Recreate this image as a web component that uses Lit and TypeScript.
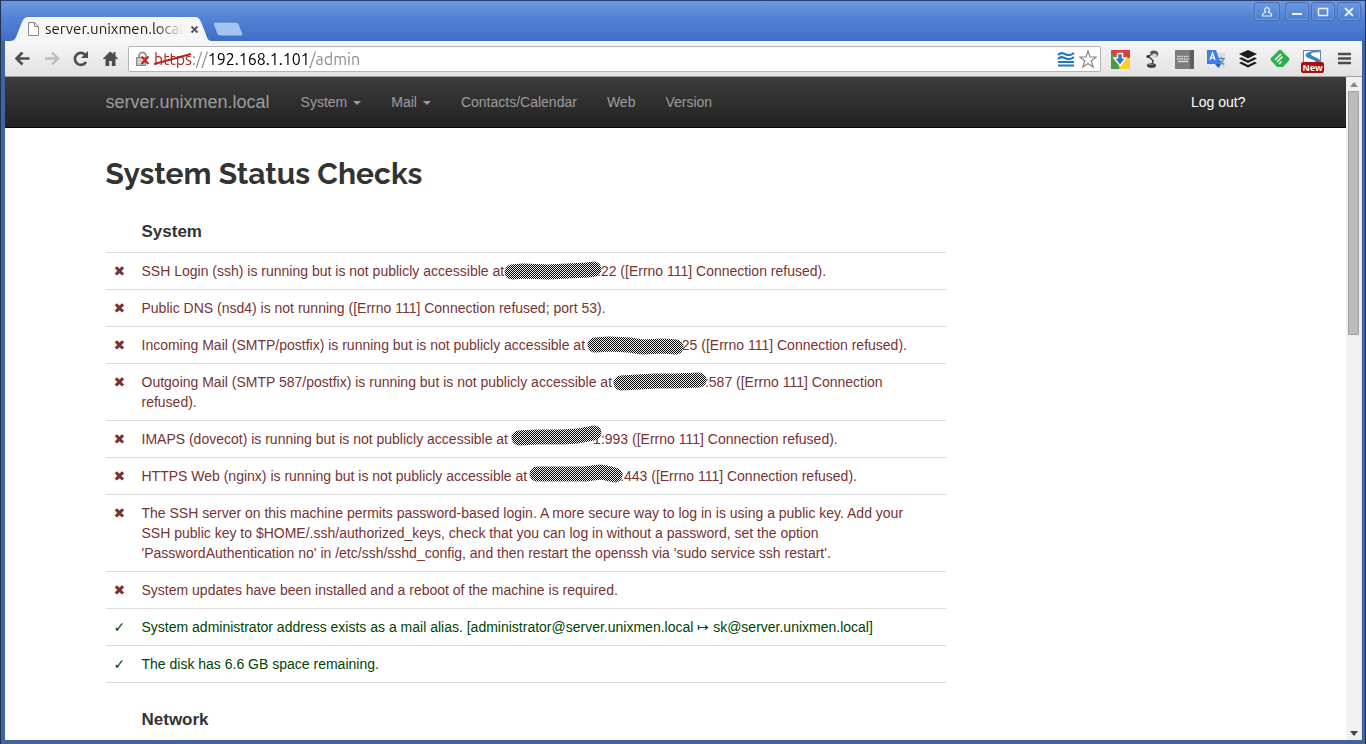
import { LitElement, html, svg, css } from "lit";
import { customElement, state } from "lit/decorators.js";

type Check = { ok: boolean; text: string; scribble?: string; peek?: string; tail?: string };

const REFUSED = "([Errno 111] Connection refused).";

const CHECKS: Check[] = [
  { ok: false, text: "SSH Login (ssh) is running but is not publicly accessible at ", scribble: "M4 11 L15 10 L40 11 L60 10 L80 9 L86 8", tail: `:22 ${REFUSED}` },
  { ok: false, text: "Public DNS (nsd4) is not running ([Errno 111] Connection refused; port 53)." },
  { ok: false, text: "Incoming Mail (SMTP/postfix) is running but is not publicly accessible at ", scribble: "M6 10 L20 9 L40 10 L54 12 L74 11 L87 12", tail: `:25 ${REFUSED}` },
  { ok: false, text: "Outgoing Mail (SMTP 587/postfix) is running but is not publicly accessible at ", scribble: "M5 11 L22 10 L40 9 L60 9 L83 8", tail: `:587 ${REFUSED}` },
  { ok: false, text: "IMAPS (dovecot) is running but is not publicly accessible at ", scribble: "M7 9 L24 8 L50 8 L66 7 L82 4", peek: "1", tail: `:993 ${REFUSED}` },
  { ok: false, text: "HTTPS Web (nginx) is running but is not publicly accessible at ", scribble: "M6 8 L25 8 L54 8 L70 6 L84 9", tail: `:443 ${REFUSED}` },
  { ok: false, text: "The SSH server on this machine permits password-based login. A more secure way to log in is using a public key. Add your SSH public key to $HOME/.ssh/authorized_keys, check that you can log in without a password, set the option 'PasswordAuthentication no' in /etc/ssh/sshd_config, and then restart the openssh via 'sudo service ssh restart'." },
  { ok: false, text: "System updates have been installed and a reboot of the machine is required." },
  { ok: true, text: "System administrator address exists as a mail alias. [administrator@server.unixmen.local ↦ sk@server.unixmen.local]" },
  { ok: true, text: "The disk has 6.6 GB space remaining." },
];

@customElement("status-page")
export class StatusPage extends LitElement {
  static styles = css`
    :host { display: block; background: #fff; color: #333; font: 14px/20px "Liberation Sans", Arial, sans-serif; }
    .container { max-width: 1140px; margin: 0 auto; padding: 0 15px; }
    .navbar { background: linear-gradient(#3c3c3c, #222); border-bottom: 1px solid #080808; }
    .bar { display: flex; align-items: center; height: 50px; }
    .bar a, .bar button { color: #9d9d9d; text-decoration: none; }
    .bar .brand { font-size: 18px; margin-right: 16px; }
    .bar .item { padding: 15px; font: inherit; background: none; border: 0; display: flex; align-items: center; cursor: pointer; }
    .caret { border: 4px solid transparent; border-top-color: currentColor; border-bottom: 0; margin-left: 6px; margin-top: 2px; }
    .bar .logout { margin-left: auto; margin-right: -15px; color: #fff; }
    h1 { margin: 0; padding-top: 29px; font: bold 30px/33px Raleway, Lato, sans-serif; color: #333; }
    table { width: 100%; max-width: 840px; border-collapse: separate; border-spacing: 0; margin-top: 5px; }
    td, th { padding: 8px; border-bottom: 1px solid #ddd; vertical-align: top; text-align: left; }
    td + td { padding-right: 16px; }
    .mark { width: 12px; font-weight: normal; font-family: "DejaVu Sans", sans-serif; }
    .group th { padding: 26px 8px 9px; font-size: 17px; line-height: 22px; font-weight: bold; }
    .bad { color: #733; }
    .good { color: #040; }
    .redacted { display: inline-block; position: relative; width: 89px; height: 20px; vertical-align: top; text-align: right; }
    .redacted svg { position: absolute; left: 0; top: 0; overflow: visible; }
  `;

  private row(c: Check) {
    return html`<tr class=${c.ok ? "good" : "bad"}>
      <td class="mark">${c.ok ? "✓" : "✖"}</td>
      <td>${c.text}${c.scribble ? html`<span class="redacted">${c.peek ?? ""}${this.scribble(c.scribble)}</span>` : ""}${c.tail ?? ""}</td>
    </tr>`;
  }

  private scribble(d: string) {
    return html`<svg width="90" height="20" aria-hidden="true">
      <defs><pattern id="dither" width="2" height="2" patternUnits="userSpaceOnUse">
        <g shape-rendering="crispEdges"><rect width="2" height="2" fill="#eee"/><rect width="1" height="1"/><rect x="1" y="1" width="1" height="1"/></g>
      </pattern></defs>
      <path d=${d} fill="none" stroke="url(#dither)" stroke-width="15" stroke-linecap="round" stroke-linejoin="round"/></svg>`;
  }

  render() {
    return html`
      <nav class="navbar"><div class="container bar">
        <a class="brand" href="#">server.unixmen.local</a>
        <button class="item">System<span class="caret"></span></button>
        <button class="item">Mail<span class="caret"></span></button>
        <a class="item" href="#">Contacts/Calendar</a>
        <a class="item" href="#">Web</a>
        <a class="item" href="#">Version</a>
        <a class="item logout" href="#">Log out?</a>
      </div></nav>
      <main class="container">
        <h1>System Status Checks</h1>
        <table>
          <tbody>
            <tr class="group"><th></th><th scope="rowgroup">System</th></tr>
            ${CHECKS.map((c) => this.row(c))}
            <tr class="group"><th></th><th scope="rowgroup">Network</th></tr>
          </tbody>
        </table>
      </main>`;
  }
}

const icon = (w: number, h: number, body: unknown) =>
  html`<svg width=${w} height=${h} viewBox="0 0 ${w} ${h}" aria-hidden="true">${body}</svg>`;

const BACK = icon(18, 18, svg`<path d="M16.500 8.500H4M9.500 2.500L3.500 8.500l6 6" fill="none" stroke="#4d4d4d" stroke-width="2.600"/>`);
const FORWARD = icon(18, 18, svg`<path d="M2 8.500h13M9 2.500l6 6-6 6" fill="none" stroke="#bcbcbc" stroke-width="2.400"/>`);
const RELOAD = icon(18, 18, svg`<path d="M13 12A6 6 0 1 1 12 4.500" fill="none" stroke="#4d4d4d" stroke-width="2.600"/><path d="M15 1v7H8z" fill="#4d4d4d"/>`);
const HOME = icon(18, 18, svg`<path d="M7 1.500L0 8.500l1 1L2.500 8.200V16h3.700v-5h2.600v5h3.700V8.200L14 9.500l1-1L12.500 6V2h-2v2z" fill="#4d4d4d"/>`);
const LOCK = icon(16, 16, svg`<path d="M5 7V5a3.500 3.500 0 0 1 7 0v3" fill="none" stroke="#999" stroke-width="2"/><rect x="2.500" y="6.500" width="9" height="8" fill="#bdbdbd" stroke="#888"/><path d="M4 9h6M4 11.500h6" stroke="#eee"/><path d="M7.500 5.500l7 7.500M14.500 5.500l-7 7.500" stroke="#c9211e" stroke-width="2"/>`);
const WAVES = icon(18, 18, svg`<path d="M1 5c3-3 5-2 8-.5s5 1 8-1.500" fill="none" stroke="#2277b5" stroke-width="2.200"/><path d="M1 9c3-3 5-2 8-.5s5 1 8-1.500" fill="none" stroke="#2277b5" stroke-width="2.200"/><path d="M1 12h16M1 15.500h16" stroke="#2277b5" stroke-width="2.200"/>`);
const STAR = icon(18, 18, svg`<path d="M9 1l2 6h6.200l-5 3.800 2 6.200L9 13.400 3.800 17l2-6.200L.8 7H7z" fill="#fff" stroke="#888" stroke-width="1.200"/>`);

const EXTENSIONS: { name: string; art: unknown }[] = [
  { name: "Downloader", art: icon(20, 20, svg`<path d="M1 1h19v8H1z" fill="#d8423a"/><path d="M1 2l7 9 2 9H1z" fill="#4a9c40"/><path d="M20 9v11H9l4-11z" fill="#f8d12d"/><path d="M7.500 4.500h5V9H16l-6 7.500L4 9h3.500z" fill="#3576b9" stroke="#fff" stroke-width="1.500"/>`) },
  { name: "Lamp", art: icon(20, 20, svg`<path d="M12 3.500L6.500 7.500l4.500 4-1 5" fill="none" stroke="#444" stroke-width="1.500"/><path d="M7.500 3.500c2-2.500 5-2.500 7-1.500s2.500 3.500 1 5c-1.500 1.500-3 1.500-4 .5s-1.500-3-4-4z" fill="#555"/><ellipse cx="12.500" cy="6.500" rx="2.400" ry="1.900" fill="#d4d4d4"/><ellipse cx="9.500" cy="16.500" rx="4.500" ry="2.300" fill="#383838"/><path d="M6.500 16q3-1.500 5 0" fill="none" stroke="#999"/><circle cx="6" cy="7.500" r="1.600" fill="#333"/>`) },
  { name: "Keyboard", art: icon(20, 20, svg`<path d="M1 1h19v19H1z" fill="#7c7c7c"/><path d="M16 1h4v19h-4z" fill="#5f5f5f"/><path d="M3 7.500h12M3 10h12" stroke="#e4e4e4" stroke-width="1.400" stroke-dasharray="1.500 .8"/><path d="M4 12.500h10" stroke="#e4e4e4" stroke-width="1.300"/>`) },
  { name: "Translate", art: icon(20, 20, svg`<path d="M10 4h9v15h-6z" fill="#dcdcdc"/><path d="M1 1h9l5 14H1z" fill="#3f7de8"/><path d="M9 15h6l-2.500 4z" fill="#2c59b8"/><path d="M4 11l2.500-7L9 11M5 8.800h3" fill="none" stroke="#fff" stroke-width="1.300"/><path d="M12 9.500h7M15.500 8v1.500M17.500 10c-1 3-3 4-4 5M13.500 11c1 2.500 3 3.500 4.500 4.500" fill="none" stroke="#5e7eae" stroke-width="1.200"/>`) },
  { name: "Buffer", art: icon(20, 20, svg`<path d="M10 1l9 4-9 4.500L1 5z" fill="#1c1c1c"/><path d="M1 9.500l2.500-1.200L10 11.500l6.500-3.200L19 9.500 10 14zM1 14l2.500-1.200L10 16l6.500-3.200L19 14l-9 4.500z" fill="#1c1c1c"/>`) },
  { name: "Feedly", art: icon(20, 20, svg`<path d="M8.500 1.500q1.500-1.500 3 0l7.500 7.500q1.200 1.300 0 2.500L13 18H7l-6-6.500q-1-1.200 0-2.500z" fill="#2bb24c"/><path d="M5.500 10.500l5-5M7.500 12.500L12 8M9.500 14.500l1.500-1.500" stroke="#fff" stroke-width="1.600" stroke-linecap="round"/>`) },
  { name: "S", art: html`<span class="badged">${icon(20, 20, svg`<rect x="1.500" y="1.500" width="17" height="17" fill="#fff" stroke="#5f86a8"/><path d="M18 2.500C11 1 4 3 3.500 6c0 3 5 3.500 8 5 2 1 2.500 2 2 3.500H18V11c-3-3-8-3.500-9-5.500C8.500 4 12 3 18 3.500z" fill="#3f86b8"/>`)}<b class="badge">New</b></span>` },
  { name: "Menu", art: icon(20, 20, svg`<path d="M4 5h13M4 9.500h13M4 14h13" stroke="#4d4d4d" stroke-width="2.600"/>`) },
];

@customElement("app-root")
export class AppRoot extends LitElement {
  @state() private url = "https://192.168.1.101/admin";

  static styles = css`
    :host { display: flex; flex-direction: column; box-sizing: border-box; height: 100vh; overflow: hidden; padding: 0 3px 4px 4px;
      border: 1px solid #1f3054; border-bottom-width: 0; border-top-color: #264072; background: #41649f;
      font: 15px/20px Ubuntu, "Noto Sans", sans-serif; color: #222; }
    button { font: inherit; padding: 0; border: 0; background: none; }
    svg { display: block; }
    .strip { display: flex; height: 40px; margin: 0 -3px 0 -4px; flex: none; background: linear-gradient(#6d9ae2, #5383d5 40%, #3f6ec5); }
    .tab { position: relative; display: flex; align-items: center; width: 200px; height: 24px; margin: 16px 0 0 10px; }
    .shape { position: absolute; left: 0; top: 0; }
    .tab-icon { position: relative; margin-left: 16px; }
    .title { position: relative; width: 138px; margin-left: 5px; overflow: hidden; white-space: nowrap; mask-image: linear-gradient(90deg, #000 80%, transparent); }
    .close { position: relative; margin-left: 7px; }
    .new-tab { align-self: flex-start; margin: 20px 0 0 1px; }
    .window { display: flex; gap: 4px; margin: 2px 5px 0 auto; align-self: flex-start; }
    .window button { width: 22px; height: 17px; display: grid; place-items: center; border: 1px solid #6f98dc; border-radius: 3px; box-shadow: 0 0 0 1px #466db6; box-sizing: border-box; }
    .window .user { width: 24px; margin-right: 3px; border-top-color: transparent; }
    .toolbar { display: flex; align-items: center; height: 35px; flex: none; padding: 0 2px; background: linear-gradient(#f6f6f6, #e2e2e2); border-bottom: 1px solid #a0a0a0; }
    .nav { width: 30px; display: grid; place-items: center; }
    .omnibox { display: flex; align-items: center; flex: 1; height: 24px; margin: 0 3px 0 1px; padding: 0 3px 0 5px; background: #fff; border: 1px solid #b4b4b4; border-radius: 2px; gap: 4px; }
    .address { position: relative; flex: 1; display: flex; }
    .address input { flex: 1; border: 0; padding: 0; margin: 0; outline: 0; height: 24px; font: 16px/24px Ubuntu, "Noto Sans", sans-serif; color: transparent;
      background: linear-gradient(90deg, #b3221f 38px, #888 38px 54px, #000 54px 156px, #888 156px); -webkit-background-clip: text; background-clip: text; }
    .strike { position: absolute; left: 0; top: 6px; }
    .ext { width: 32px; display: grid; place-items: center; }
    .badged { position: relative; display: block; }
    .badge { position: absolute; left: -1px; top: 13px; width: 23px; height: 11px; border-radius: 2px; background: #a80d12; color: #fff; font: bold 9px/11px "Noto Sans", sans-serif; text-align: center; }
    .view { display: flex; flex: 1; min-height: 0; background: #fff; }
    .view status-page { flex: 1; overflow: hidden; }
    .scroll { width: 16px; box-sizing: border-box; display: flex; flex-direction: column; align-items: center; background: #f1f1f1; border-right: 1px solid #dbe6f5; }
    .scroll button { height: 14px; display: grid; place-items: center; }
    .track { flex: 1; display: flex; }
    .thumb { box-sizing: border-box; width: 11px; height: 38.5%; background: #bcbcbc; border: 1px solid #a2a2a2; }
  `;

  render() {
    return html`
      <div class="strip">
        <div class="tab">
          <svg class="shape" width="200" height="24" aria-hidden="true"><path d="M0 24c5-1 5-4 7-9l4-10q2-5 6-5h167q4 0 6 5l4 10c2 5 2 8 6 9z" fill="#f6f6f6"/></svg>
          <span class="tab-icon">${icon(13, 16, svg`<path d="M1.500 1.500h6l4 4v9h-10zM7.500 1.500v4h4" fill="#fff" stroke="#888"/>`)}</span>
          <span class="title">server.unixmen.local</span>
          <button class="close" aria-label="Close tab">${icon(9, 9, svg`<path d="M1.500 1.500l6 6M7.500 1.500l-6 6" stroke="#555" stroke-width="1.800"/>`)}</button>
        </div>
        <button class="new-tab" aria-label="New tab">${icon(32, 16, svg`<path d="M3 1h21q2 0 3 2l4 10q0 2-2 2H9q-3 0-4-2L1 3q0-2 2-2z" fill="#a2c4f4" stroke="#4570b8"/>`)}</button>
        <div class="window">
          <button class="user" aria-label="User">${icon(12, 12, svg`<path d="M1.500 10V8.500q.5-1.500 3-2V5.800a2.400 2.400 0 1 1 3 0v.7q2.500.5 3 2V10z" fill="none" stroke="#eaf2ff" stroke-width="1.200"/>`)}</button>
          <button aria-label="Minimize">${icon(12, 12, svg`<path d="M1 8h10" stroke="#eaf2ff" stroke-width="2"/>`)}</button>
          <button aria-label="Maximize">${icon(12, 12, svg`<rect x="1.500" y="2.500" width="9" height="7" fill="none" stroke="#eaf2ff" stroke-width="1.500"/>`)}</button>
          <button aria-label="Close">${icon(12, 12, svg`<path d="M2 2l8 8M10 2l-8 8" stroke="#eaf2ff" stroke-width="1.800"/>`)}</button>
        </div>
      </div>
      <div class="toolbar">
        <button class="nav" aria-label="Back">${BACK}</button>
        <button class="nav" aria-label="Forward">${FORWARD}</button>
        <button class="nav" aria-label="Reload">${RELOAD}</button>
        <button class="nav" aria-label="Home">${HOME}</button>
        <div class="omnibox">
          ${LOCK}
          <div class="address">
            <input aria-label="Address" spellcheck="false" .value=${this.url} @input=${(e: Event) => (this.url = (e.target as HTMLInputElement).value)} />
            <svg class="strike" width="38" height="12" aria-hidden="true"><path d="M0 11L37 1" stroke="#b3221f" stroke-width="2"/></svg>
          </div>
          <button aria-label="Site tools">${WAVES}</button>
          <button aria-label="Bookmark">${STAR}</button>
        </div>
        ${EXTENSIONS.map((x) => html`<button class="ext" aria-label=${x.name}>${x.art}</button>`)}
      </div>
      <div class="view">
        <status-page></status-page>
        <div class="scroll">
          <button aria-label="Scroll up">${icon(8, 5, svg`<path d="M4 0l4 5H0z" fill="#8a8a8a"/>`)}</button>
          <div class="track"><div class="thumb"></div></div>
          <button aria-label="Scroll down">${icon(8, 5, svg`<path d="M0 0h8L4 5z" fill="#444"/>`)}</button>
        </div>
      </div>`;
  }
}
